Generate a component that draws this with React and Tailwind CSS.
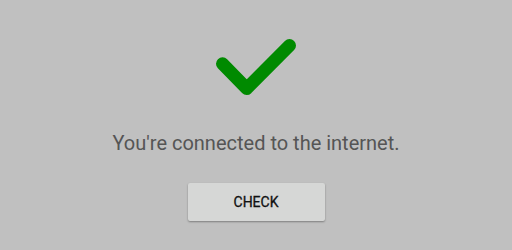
export default function App() {
  return (
    <div className="w-[512px] h-[250px] bg-[#c0c0c0] flex flex-col items-center font-['Roboto',sans-serif]">
      <svg width="84" height="64" viewBox="0 0 84 64" className="mt-[36px]">
        <path
          d="M8.5 27.8 L32.7 52.5 L75.5 9.5"
          fill="none"
          stroke="#008a00"
          strokeWidth="13"
          strokeLinecap="round"
          strokeLinejoin="round"
        />
      </svg>
      <p className="mt-[31px] text-[20px] leading-[24px] text-[#555555]">You're connected to the internet.</p>
      <button className="mt-[28px] w-[137px] h-[38px] bg-[#d6d7d6] rounded-[2px] shadow-[0_1px_2px_rgba(0,0,0,0.35)] text-[14px] font-normal text-[#111111] [-webkit-text-stroke:0.3px_#111111]">
        CHECK
      </button>
    </div>
  );
}
